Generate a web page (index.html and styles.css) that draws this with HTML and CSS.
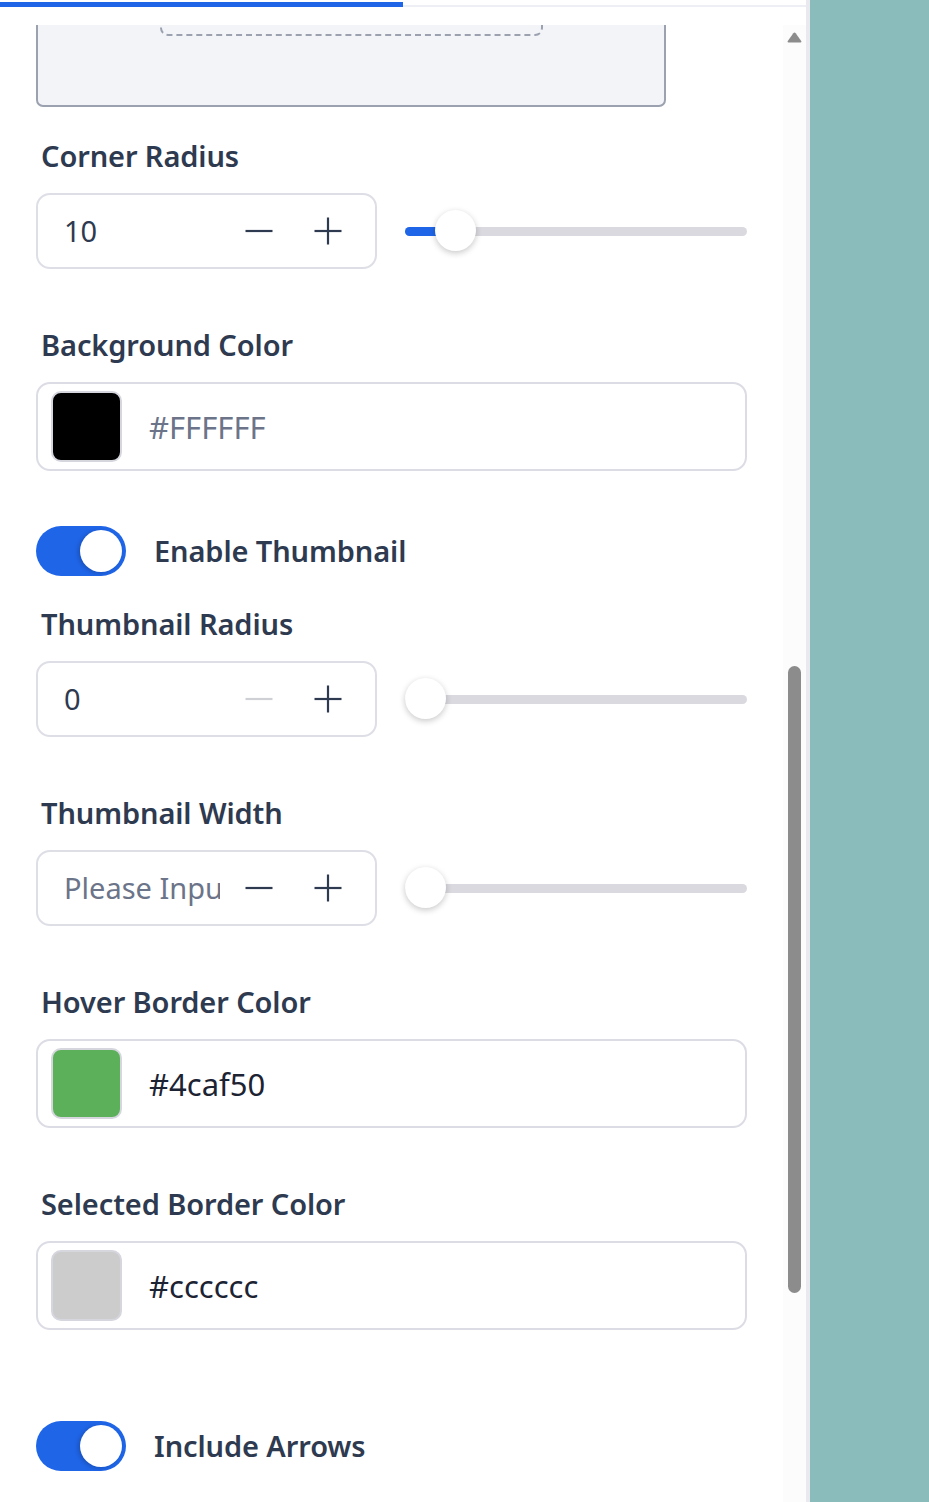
FILE: index.html
```html
<!DOCTYPE html>
<html lang="en">
<head>
<meta charset="utf-8">
<title>Settings</title>
<link rel="stylesheet" href="styles.css">
</head>
<body>
<div class="panel">
  <div class="header">
    <div class="progress"></div>
    <div class="progress-rest"></div>
  </div>
  <div class="scroll">
    <div class="content">
      <div class="card">
        <div class="dashed"></div>
      </div>

      <div class="field first">
        <div class="label">Corner Radius</div>
        <div class="row">
          <div class="number">
            <span class="num-text">10</span>
            <span class="step"><svg width="28" height="28" viewBox="0 0 28 28"><line x1="0.5" y1="14" x2="27.5" y2="14" class="ico"/></svg></span>
            <span class="step"><svg width="28" height="28" viewBox="0 0 28 28"><line x1="0.5" y1="14" x2="27.5" y2="14" class="ico"/><line x1="14" y1="0.5" x2="14" y2="27.5" class="ico"/></svg></span>
          </div>
          <div class="slider">
            <div class="track"><div class="fill" style="width:50px"></div></div>
            <div class="thumb" style="left:50px"></div>
          </div>
        </div>
      </div>

      <div class="field">
        <div class="label">Background Color</div>
        <div class="color">
          <span class="swatch swatch-black"></span>
          <span class="color-text muted">#FFFFFF</span>
        </div>
      </div>

      <div class="toggle-row t1">
        <span class="toggle"><span class="knob"></span></span>
        <span class="toggle-label">Enable Thumbnail</span>
      </div>

      <div class="field after-toggle">
        <div class="label">Thumbnail Radius</div>
        <div class="row">
          <div class="number">
            <span class="num-text">0</span>
            <span class="step"><svg width="28" height="28" viewBox="0 0 28 28"><line x1="0.5" y1="14" x2="27.5" y2="14" class="ico disabled"/></svg></span>
            <span class="step"><svg width="28" height="28" viewBox="0 0 28 28"><line x1="0.5" y1="14" x2="27.5" y2="14" class="ico"/><line x1="14" y1="0.5" x2="14" y2="27.5" class="ico"/></svg></span>
          </div>
          <div class="slider">
            <div class="track"></div>
            <div class="thumb" style="left:20px"></div>
          </div>
        </div>
      </div>

      <div class="field">
        <div class="label">Thumbnail Width</div>
        <div class="row">
          <div class="number">
            <span class="num-text muted">Please Input</span>
            <span class="step"><svg width="28" height="28" viewBox="0 0 28 28"><line x1="0.5" y1="14" x2="27.5" y2="14" class="ico"/></svg></span>
            <span class="step"><svg width="28" height="28" viewBox="0 0 28 28"><line x1="0.5" y1="14" x2="27.5" y2="14" class="ico"/><line x1="14" y1="0.5" x2="14" y2="27.5" class="ico"/></svg></span>
          </div>
          <div class="slider">
            <div class="track"></div>
            <div class="thumb" style="left:20px"></div>
          </div>
        </div>
      </div>

      <div class="field">
        <div class="label">Hover Border Color</div>
        <div class="color">
          <span class="swatch swatch-green"></span>
          <span class="color-text">#4caf50</span>
        </div>
      </div>

      <div class="field">
        <div class="label">Selected Border Color</div>
        <div class="color">
          <span class="swatch swatch-grey"></span>
          <span class="color-text">#cccccc</span>
        </div>
      </div>

      <div class="toggle-row t2">
        <span class="toggle"><span class="knob"></span></span>
        <span class="toggle-label">Include Arrows</span>
      </div>
    </div>
    <div class="scrollbar">
      <svg class="arrow" width="15" height="11" viewBox="0 0 15 11"><path d="M6.3 1.2 Q7.5 -0.4 8.7 1.2 L14.2 9 Q15 10.5 13.4 10.5 L1.6 10.5 Q0 10.5 0.8 9 Z" fill="#8c8c8c"/></svg>
      <div class="sb-thumb"></div>
    </div>
  </div>
</div>
<div class="side"></div>
</body>
</html>
```

FILE: styles.css
```css
* { box-sizing: border-box; }
html, body { margin: 0; padding: 0; }
body {
  display: flex;
  width: 929px;
  height: 1502px;
  overflow: hidden;
  background: #ffffff;
  font-family: "Noto Sans", "Open Sans", "Liberation Sans", sans-serif;
  color: #2e3a50;
}
.panel {
  width: 810px;
  height: 1502px;
  border-right: 4px solid #e9e9ef;
  display: flex;
  flex-direction: column;
  background: #ffffff;
}
.header {
  height: 25px;
  flex: none;
  display: flex;
  align-items: flex-start;
  padding-top: 2px;
}
.progress {
  width: 403px;
  height: 5px;
  background: #1f65e8;
}
.progress-rest {
  flex: 1;
  height: 2px;
  margin-top: 3px;
  background: #eeeff4;
}
.scroll {
  flex: 1;
  display: flex;
  overflow: hidden;
}
.content {
  width: 783px;
  flex: none;
  padding-left: 36px;
}
.scrollbar {
  width: 23px;
  flex: none;
  background: #fcfcfc;
  display: flex;
  flex-direction: column;
  align-items: center;
  padding-top: 7px;
}
.arrow { display: block; }
.sb-thumb {
  margin-top: 623px;
  width: 13px;
  height: 627px;
  border-radius: 7px;
  background: #8c8c8c;
}
.side {
  flex: 1;
  background: #8bbcbc;
}

.card {
  width: 630px;
  height: 150px;
  margin-top: -68px;
  background: #f3f4f8;
  border: 2px solid #9ba1af;
  border-radius: 7px;
  padding-top: 17px;
}
.dashed {
  margin-left: 122px;
  width: 383px;
  height: 60px;
  border: 2px dashed #9ba1af;
  border-radius: 8px;
}

.field { margin-top: 56px; }
.field.first { margin-top: 29px; }
.field.after-toggle { margin-top: 28px; }
.label {
  height: 40px;
  line-height: 40px;
  font-size: 29px;
  font-weight: 600;
  letter-spacing: -0.1px;
  color: #2e3a50;
  margin-bottom: 17px;
  padding-left: 5px;
  white-space: nowrap;
}

.row {
  display: flex;
  align-items: center;
  gap: 28px;
}
.number {
  width: 341px;
  height: 76px;
  border: 2px solid #dedee6;
  border-radius: 14px;
  display: flex;
  align-items: center;
  padding-left: 26px;
  padding-right: 13px;
  background: #fff;
}
.num-text {
  width: 160px;
  flex: none;
  overflow: hidden;
  white-space: nowrap;
  font-size: 29px;
  color: #2e3a50;
  line-height: 40px;
}
.num-text.muted { width: 156px; margin-right: 4px; }
.muted { color: #6b7489 !important; }
.step {
  width: 69px;
  display: flex;
  justify-content: center;
  align-items: center;
}
.step svg { display: block; }
.ico { stroke: #2e3a50; stroke-width: 2.2; }
.ico.disabled { stroke: #cfd0d6; }

.slider {
  position: relative;
  width: 342px;
  height: 42px;
  display: flex;
  align-items: center;
}
.track {
  width: 100%;
  height: 9px;
  border-radius: 5px;
  background: #d9d9df;
  overflow: hidden;
}
.fill {
  height: 100%;
  background: #1f65e8;
}
.thumb {
  position: absolute;
  top: 0;
  width: 41px;
  height: 41px;
  margin-left: -20px;
  border-radius: 50%;
  background: #fff;
  box-shadow: 0 2px 6px rgba(0, 0, 0, 0.22);
}

.color {
  width: 711px;
  height: 89px;
  border: 2px solid #dcdce5;
  border-radius: 14px;
  display: flex;
  align-items: center;
  padding-left: 13px;
  gap: 27px;
}
.swatch {
  width: 71px;
  height: 71px;
  border-radius: 10px;
  border: 2px solid #d5d6de;
}
.swatch-black { background: #000; }
.swatch-green { background: #5cb05a; }
.swatch-grey { background: #cccccc; }
.color-text {
  font-size: 31px;
  color: #1c2333;
  line-height: 40px;
}

.toggle-row {
  display: flex;
  align-items: center;
  gap: 28px;
}
.toggle-row.t1 { margin-top: 55px; }
.toggle-row.t2 { margin-top: 91px; }
.toggle {
  width: 90px;
  height: 50px;
  border-radius: 25px;
  background: #1f65e8;
  display: flex;
  align-items: center;
  justify-content: flex-end;
  padding-right: 4px;
}
.knob {
  width: 42px;
  height: 42px;
  border-radius: 50%;
  background: #fff;
  box-shadow: -2px 1px 4px rgba(0, 0, 0, 0.2);
}
.toggle-label {
  font-size: 29px;
  font-weight: 600;
  letter-spacing: -0.1px;
  color: #2e3a50;
  line-height: 40px;
}
```
